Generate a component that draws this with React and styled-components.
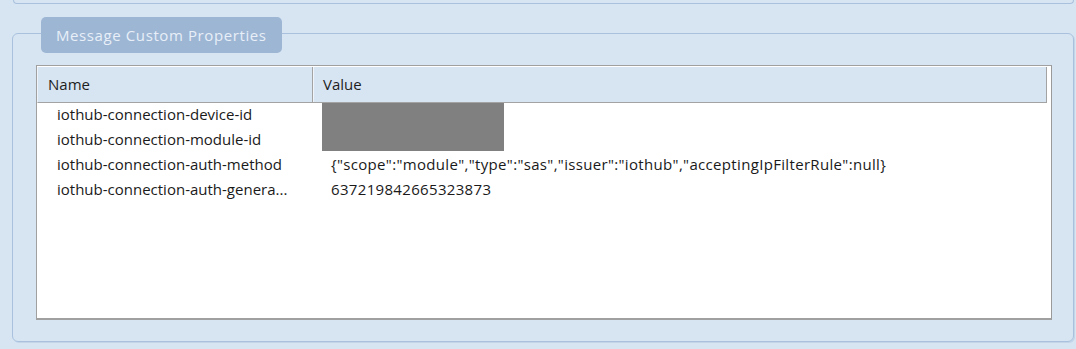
import React from "react";
import styled, { createGlobalStyle } from "styled-components";

const GlobalStyle = createGlobalStyle`
  html, body {
    margin: 0;
    padding: 0;
    background: #d7e4f2;
    overflow: hidden;
  }
  body {
    font-family: "Open Sans", "Liberation Sans", sans-serif;
  }
`;

const rows = [
  { name: "iothub-connection-device-id", value: "" },
  { name: "iothub-connection-module-id", value: "" },
  {
    name: "iothub-connection-auth-method",
    value: '{"scope":"module","type":"sas","issuer":"iothub","acceptingIpFilterRule":null}',
  },
  { name: "iothub-connection-auth-genera...", value: "637219842665323873" },
];

const App = () => {
  return (
    <>
      <GlobalStyle />
      <Page>
        <TopPanel />
        <GroupBox>
          <Legend>Message Custom Properties</Legend>
          <ListView>
            <Header>
              <HeaderCell first>Name</HeaderCell>
              <HeaderCell>Value</HeaderCell>
            </Header>
            <Body>
              {rows.map((r) => (
                <Row key={r.name}>
                  <NameCell>{r.name}</NameCell>
                  <ValueCell>{r.value}</ValueCell>
                </Row>
              ))}
              <Redaction />
            </Body>
          </ListView>
        </GroupBox>
      </Page>
    </>
  );
};

export default App;

const Page = styled.div`
  width: 1076px;
  height: 349px;
  display: flex;
  flex-direction: column;
`;

const TopPanel = styled.div`
  flex-shrink: 0;
  height: 3px;
  margin: 0 2px 0 13px;
  border: 1px solid #a9c1dd;
  border-top: none;
  border-radius: 0 0 6px 6px;
`;

const GroupBox = styled.div`
  position: relative;
  flex-shrink: 0;
  box-sizing: border-box;
  margin: 29px 2px 0 12px;
  height: 309px;
  border: 1px solid #a9c1dd;
  border-radius: 6px;
  padding: 31px 21px 0 23px;
  box-shadow: 1px 1px 0 #c4d5e8;
`;

const Legend = styled.div`
  position: absolute;
  top: -17px;
  left: 28px;
  width: 241px;
  height: 36px;
  box-sizing: border-box;
  background: #9db6d4;
  border-radius: 5px;
  color: #e8eff8;
  font-size: 15px;
  letter-spacing: 0.6px;
  line-height: 36px;
  padding-left: 15px;
`;

const ListView = styled.div`
  height: 252px;
  background: #fff;
  border: 1px solid #a0a0a0;
  border-right-color: #9a9a9a;
  border-bottom: 2px solid #a0a0a0;
  display: flex;
  flex-direction: column;
`;

const Header = styled.div`
  display: grid;
  grid-template-columns: 275px 1fr;
  height: 35px;
  margin: 1px 4px 0 0;
  background: #d7e4f2;
  border-bottom: 1px solid #a3a3a3;
  border-right: 1px solid #a3a3a3;
  border-left: 1px solid #eef4fa;
`;

const HeaderCell = styled.div`
  font-size: 15px;
  color: #1e1e1e;
  line-height: 35px;
  padding-left: ${(p) => (p.first ? "10px" : "9px")};
  border-right: ${(p) => (p.first ? "1px solid #a3a3a3" : "none")};
  border-left: ${(p) => (p.first ? "none" : "1px solid #eef4fa")};
`;

const Body = styled.div`
  position: relative;
`;

const Row = styled.div`
  display: grid;
  grid-template-columns: 276px 1fr;
  height: 25px;
  line-height: 23px;
  font-size: 15px;
  color: #1a1a1a;
  white-space: nowrap;
`;

const NameCell = styled.div`
  padding-left: 20px;
  overflow: hidden;
`;

const ValueCell = styled.div`
  padding-left: 18px;
  letter-spacing: 0.33px;
`;

const Redaction = styled.div`
  position: absolute;
  left: 285px;
  top: 0;
  width: 182px;
  height: 48px;
  background: #808080;
`;
